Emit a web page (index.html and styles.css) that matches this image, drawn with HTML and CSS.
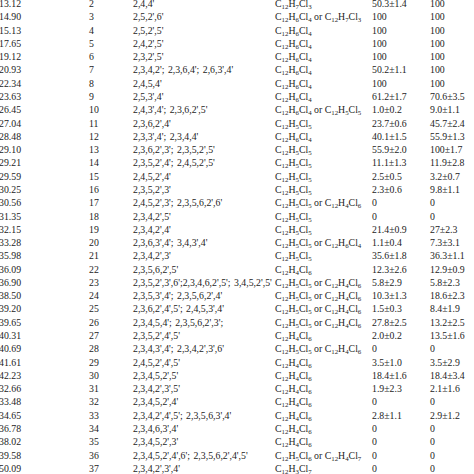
FILE: index.html
```html
<!DOCTYPE html>
<html>
<head>
<meta charset="utf-8">
<link rel="stylesheet" href="styles.css">
</head>
<body>
<div class="table">
<div class="row"><span>13.12</span><span>2</span><span class="pos">2,4,4'</span><span>C<sub>12</sub>H<sub>7</sub>Cl<sub>3</sub></span><span>50.3±1.4</span><span>100</span></div>
<div class="row"><span>14.90</span><span>3</span><span class="pos">2,5,2',6'</span><span>C<sub>12</sub>H<sub>6</sub>Cl<sub>4</sub> or C<sub>12</sub>H<sub>7</sub>Cl<sub>3</sub></span><span>100</span><span>100</span></div>
<div class="row"><span>15.13</span><span>4</span><span class="pos">2,5,2',5'</span><span>C<sub>12</sub>H<sub>6</sub>Cl<sub>4</sub></span><span>100</span><span>100</span></div>
<div class="row"><span>17.65</span><span>5</span><span class="pos">2,4,2',5'</span><span>C<sub>12</sub>H<sub>6</sub>Cl<sub>4</sub></span><span>100</span><span>100</span></div>
<div class="row"><span>19.12</span><span>6</span><span class="pos">2,3,2',5'</span><span>C<sub>12</sub>H<sub>6</sub>Cl<sub>4</sub></span><span>100</span><span>100</span></div>
<div class="row"><span>20.93</span><span>7</span><span class="pos">2,3,4,2'; 2,3,6,4'; 2,6,3',4'</span><span>C<sub>12</sub>H<sub>6</sub>Cl<sub>4</sub></span><span>50.2±1.1</span><span>100</span></div>
<div class="row"><span>22.34</span><span>8</span><span class="pos">2,4,5,4'</span><span>C<sub>12</sub>H<sub>6</sub>Cl<sub>4</sub></span><span>100</span><span>100</span></div>
<div class="row"><span>23.63</span><span>9</span><span class="pos">2,5,3',4'</span><span>C<sub>12</sub>H<sub>6</sub>Cl<sub>4</sub></span><span>61.2±1.7</span><span>70.6±3.5</span></div>
<div class="row"><span>26.45</span><span>10</span><span class="pos">2,4,3',4'; 2,3,6,2',5'</span><span>C<sub>12</sub>H<sub>6</sub>Cl<sub>4</sub> or C<sub>12</sub>H<sub>5</sub>Cl<sub>5</sub></span><span>1.0±0.2</span><span>9.0±1.1</span></div>
<div class="row"><span>27.04</span><span>11</span><span class="pos">2,3,6,2',4'</span><span>C<sub>12</sub>H<sub>5</sub>Cl<sub>5</sub></span><span>23.7±0.6</span><span>45.7±2.4</span></div>
<div class="row"><span>28.48</span><span>12</span><span class="pos">2,3,3',4'; 2,3,4,4'</span><span>C<sub>12</sub>H<sub>6</sub>Cl<sub>4</sub></span><span>40.1±1.5</span><span>55.9±1.3</span></div>
<div class="row"><span>29.10</span><span>13</span><span class="pos">2,3,6,2',3'; 2,3,5,2',5'</span><span>C<sub>12</sub>H<sub>5</sub>Cl<sub>5</sub></span><span>55.9±2.0</span><span>100±1.7</span></div>
<div class="row"><span>29.21</span><span>14</span><span class="pos">2,3,5,2',4'; 2,4,5,2',5'</span><span>C<sub>12</sub>H<sub>5</sub>Cl<sub>5</sub></span><span>11.1±1.3</span><span>11.9±2.8</span></div>
<div class="row"><span>29.59</span><span>15</span><span class="pos">2,4,5,2',4'</span><span>C<sub>12</sub>H<sub>5</sub>Cl<sub>5</sub></span><span>2.5±0.5</span><span>3.2±0.7</span></div>
<div class="row"><span>30.25</span><span>16</span><span class="pos">2,3,5,2',3'</span><span>C<sub>12</sub>H<sub>5</sub>Cl<sub>5</sub></span><span>2.3±0.6</span><span>9.8±1.1</span></div>
<div class="row"><span>30.56</span><span>17</span><span class="pos">2,4,5,2',3'; 2,3,5,6,2',6'</span><span>C<sub>12</sub>H<sub>5</sub>Cl<sub>5</sub> or C<sub>12</sub>H<sub>4</sub>Cl<sub>6</sub></span><span>0</span><span>0</span></div>
<div class="row"><span>31.35</span><span>18</span><span class="pos">2,3,4,2',5'</span><span>C<sub>12</sub>H<sub>5</sub>Cl<sub>5</sub></span><span>0</span><span>0</span></div>
<div class="row"><span>32.15</span><span>19</span><span class="pos">2,3,4,2',4'</span><span>C<sub>12</sub>H<sub>5</sub>Cl<sub>5</sub></span><span>21.4±0.9</span><span>27±2.3</span></div>
<div class="row"><span>33.28</span><span>20</span><span class="pos">2,3,6,3',4'; 3,4,3',4'</span><span>C<sub>12</sub>H<sub>5</sub>Cl<sub>5</sub> or C<sub>12</sub>H<sub>6</sub>Cl<sub>4</sub></span><span>1.1±0.4</span><span>7.3±3.1</span></div>
<div class="row"><span>35.98</span><span>21</span><span class="pos">2,3,4,2',3'</span><span>C<sub>12</sub>H<sub>5</sub>Cl<sub>5</sub></span><span>35.6±1.8</span><span>36.3±1.1</span></div>
<div class="row"><span>36.09</span><span>22</span><span class="pos">2,3,5,6,2',5'</span><span>C<sub>12</sub>H<sub>4</sub>Cl<sub>6</sub></span><span>12.3±2.6</span><span>12.9±0.9</span></div>
<div class="row"><span>36.90</span><span>23</span><span class="pos">2,3,5,2',3',6';2,3,4,6,2',5'; 3,4,5,2',5'</span><span>C<sub>12</sub>H<sub>5</sub>Cl<sub>5</sub> or C<sub>12</sub>H<sub>4</sub>Cl<sub>6</sub></span><span>5.8±2.9</span><span>5.8±2.3</span></div>
<div class="row"><span>38.50</span><span>24</span><span class="pos">2,3,5,3',4'; 2,3,5,6,2',4'</span><span>C<sub>12</sub>H<sub>5</sub>Cl<sub>5</sub> or C<sub>12</sub>H<sub>4</sub>Cl<sub>6</sub></span><span>10.3±1.3</span><span>18.6±2.3</span></div>
<div class="row"><span>39.20</span><span>25</span><span class="pos">2,3,6,2',4',5'; 2,4,5,3',4'</span><span>C<sub>12</sub>H<sub>5</sub>Cl<sub>5</sub> or C<sub>12</sub>H<sub>4</sub>Cl<sub>6</sub></span><span>1.5±0.3</span><span>8.4±1.9</span></div>
<div class="row"><span>39.65</span><span>26</span><span class="pos">2,3,4,5,4'; 2,3,5,6,2',3';</span><span>C<sub>12</sub>H<sub>5</sub>Cl<sub>5</sub> or C<sub>12</sub>H<sub>4</sub>Cl<sub>6</sub></span><span>27.8±2.5</span><span>13.2±2.5</span></div>
<div class="row"><span>40.31</span><span>27</span><span class="pos">2,3,5,2',4',5'</span><span>C<sub>12</sub>H<sub>4</sub>Cl<sub>6</sub></span><span>2.0±0.2</span><span>13.5±1.6</span></div>
<div class="row"><span>40.69</span><span>28</span><span class="pos">2,3,4,3',4'; 2,3,4,2',3',6'</span><span>C<sub>12</sub>H<sub>5</sub>Cl<sub>5</sub> or C<sub>12</sub>H<sub>4</sub>Cl<sub>6</sub></span><span>0</span><span>0</span></div>
<div class="row"><span>41.61</span><span>29</span><span class="pos">2,4,5,2',4',5'</span><span>C<sub>12</sub>H<sub>4</sub>Cl<sub>6</sub></span><span>3.5±1.0</span><span>3.5±2.9</span></div>
<div class="row"><span>42.23</span><span>30</span><span class="pos">2,3,4,5,2',5'</span><span>C<sub>12</sub>H<sub>4</sub>Cl<sub>6</sub></span><span>18.4±1.6</span><span>18.4±3.4</span></div>
<div class="row"><span>32.66</span><span>31</span><span class="pos">2,3,4,2',3',5'</span><span>C<sub>12</sub>H<sub>4</sub>Cl<sub>6</sub></span><span>1.9±2.3</span><span>2.1±1.6</span></div>
<div class="row"><span>33.48</span><span>32</span><span class="pos">2,3,4,5,2',4'</span><span>C<sub>12</sub>H<sub>4</sub>Cl<sub>6</sub></span><span>0</span><span>0</span></div>
<div class="row"><span>34.65</span><span>33</span><span class="pos">2,3,4,2',4',5'; 2,3,5,6,3',4'</span><span>C<sub>12</sub>H<sub>4</sub>Cl<sub>6</sub></span><span>2.8±1.1</span><span>2.9±1.2</span></div>
<div class="row"><span>36.78</span><span>34</span><span class="pos">2,3,4,6,3',4'</span><span>C<sub>12</sub>H<sub>4</sub>Cl<sub>6</sub></span><span>0</span><span>0</span></div>
<div class="row"><span>38.02</span><span>35</span><span class="pos">2,3,4,5,2',3'</span><span>C<sub>12</sub>H<sub>4</sub>Cl<sub>6</sub></span><span>0</span><span>0</span></div>
<div class="row"><span>39.58</span><span>36</span><span class="pos">2,3,4,5,2',4',6'; 2,3,5,6,2',4',5'</span><span>C<sub>12</sub>H<sub>5</sub>Cl<sub>6</sub> or C<sub>12</sub>H<sub>4</sub>Cl<sub>7</sub></span><span>0</span><span>0</span></div>
<div class="row"><span>50.09</span><span>37</span><span class="pos">2,3,4,2',3',4'</span><span>C<sub>12</sub>H<sub>3</sub>Cl<sub>7</sub></span><span>0</span><span>0</span></div>
</div>
</body>
</html>
```

FILE: styles.css
```css
html, body {
  margin: 0;
  padding: 0;
  background: #fff;
  overflow: hidden;
}
body {
  font-family: "Liberation Serif", "Times New Roman", serif;
  font-size: 9.8px;
  color: #1c1c1c;
}
.table {
  margin: -3px 0 0 -1px;
}
.row {
  display: grid;
  grid-template-columns: 90px 44px 142px 97px 58px 60px;
  height: 13.29px;
  line-height: 13.29px;
  white-space: nowrap;
}
.row span {
  display: block;
  overflow: visible;
}
.pos {
  word-spacing: 1px;
}
sub {
  font-size: 70%;
  line-height: 0;
  vertical-align: -0.25em;
}
```
